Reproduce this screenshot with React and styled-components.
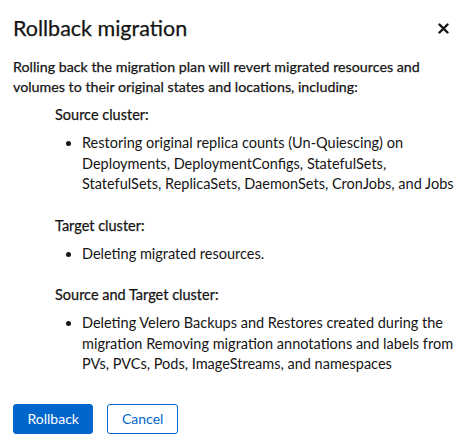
import React from "react";
import styled, { createGlobalStyle } from "styled-components";

const GlobalStyle = createGlobalStyle`
  html, body {
    margin: 0;
    padding: 0;
    background: #ffffff;
  }
  body {
    font-family: Lato, "Open Sans", sans-serif;
    color: #151515;
  }
`;

/* ===== MODAL ===== */
const Modal = styled.div`
  width: 474px;
  box-sizing: border-box;
  padding: 14px 20px 0 13px;
`;

const Header = styled.div`
  display: flex;
  justify-content: space-between;
  align-items: center;
`;

const Title = styled.h1`
  margin: 0;
  font-size: 21.5px;
  line-height: 28px;
  font-weight: 400;
  -webkit-text-stroke: 0.25px currentColor;
`;

const CloseButton = styled.button`
  display: flex;
  align-items: center;
  justify-content: center;
  width: 24px;
  height: 24px;
  margin-right: -1px;
  padding: 0;
  border: none;
  background: transparent;
  cursor: pointer;
`;

const Intro = styled.p`
  margin: 15px 0 8px;
  font-size: 14.25px;
  line-height: 20px;
  font-weight: 400;
  -webkit-text-stroke: 0.25px currentColor;
`;

/* ===== SECTIONS ===== */
const Sections = styled.div`
  display: flex;
  flex-direction: column;
  gap: 21px;
  padding-left: 42px;
`;

const SectionTitle = styled.h3`
  margin: 0 0 8px;
  font-size: 14.5px;
  line-height: 20px;
  font-weight: 400;
  -webkit-text-stroke: 0.25px currentColor;
`;

const List = styled.ul`
  margin: 0;
  padding-left: 27px;
  font-size: 14.5px;
  line-height: 20.5px;
  font-weight: 400;
  white-space: nowrap;
`;

/* ===== FOOTER ===== */
const Footer = styled.div`
  display: flex;
  gap: 14px;
  margin-top: 29px;
`;

const Button = styled.button`
  height: 30px;
  padding: 0 13.5px;
  font-family: inherit;
  font-size: 14px;
  border-radius: 3px;
  cursor: pointer;
  border: 1px solid #0066cc;
  background: ${(p) => (p.primary ? "#0066cc" : "#ffffff")};
  color: ${(p) => (p.primary ? "#ffffff" : "#0066cc")};
`;

const CloseIcon = () => (
  <svg width="11" height="11" viewBox="0 0 11 11">
    <path d="M1.5 1.5 L9.5 9.5 M9.5 1.5 L1.5 9.5" stroke="#151515" strokeWidth="2.4" strokeLinecap="round" />
  </svg>
);

const sections = [
  {
    title: "Source cluster:",
    items: [
      [
        "Restoring original replica counts (Un-Quiescing) on",
        "Deployments, DeploymentConfigs, StatefulSets,",
        "StatefulSets, ReplicaSets, DaemonSets, CronJobs, and Jobs",
      ],
    ],
  },
  {
    title: "Target cluster:",
    items: [["Deleting migrated resources."]],
  },
  {
    title: "Source and Target cluster:",
    items: [
      [
        "Deleting Velero Backups and Restores created during the",
        "migration Removing migration annotations and labels from",
        "PVs, PVCs, Pods, ImageStreams, and namespaces",
      ],
    ],
  },
];

export default function App() {
  return (
    <>
      <GlobalStyle />
      <Modal>
        <Header>
          <Title>Rollback migration</Title>
          <CloseButton aria-label="Close">
            <CloseIcon />
          </CloseButton>
        </Header>
        <Intro>
          Rolling back the migration plan will revert migrated resources and
          <br />
          volumes to their original states and locations, including:
        </Intro>
        <Sections>
          {sections.map((s) => (
            <div key={s.title}>
              <SectionTitle>{s.title}</SectionTitle>
              <List>
                {s.items.map((lines, i) => (
                  <li key={i}>
                    {lines.map((l, j) => (
                      <React.Fragment key={j}>
                        {j > 0 && <br />}
                        {l}
                      </React.Fragment>
                    ))}
                  </li>
                ))}
              </List>
            </div>
          ))}
        </Sections>
        <Footer>
          <Button primary>Rollback</Button>
          <Button>Cancel</Button>
        </Footer>
      </Modal>
    </>
  );
}
